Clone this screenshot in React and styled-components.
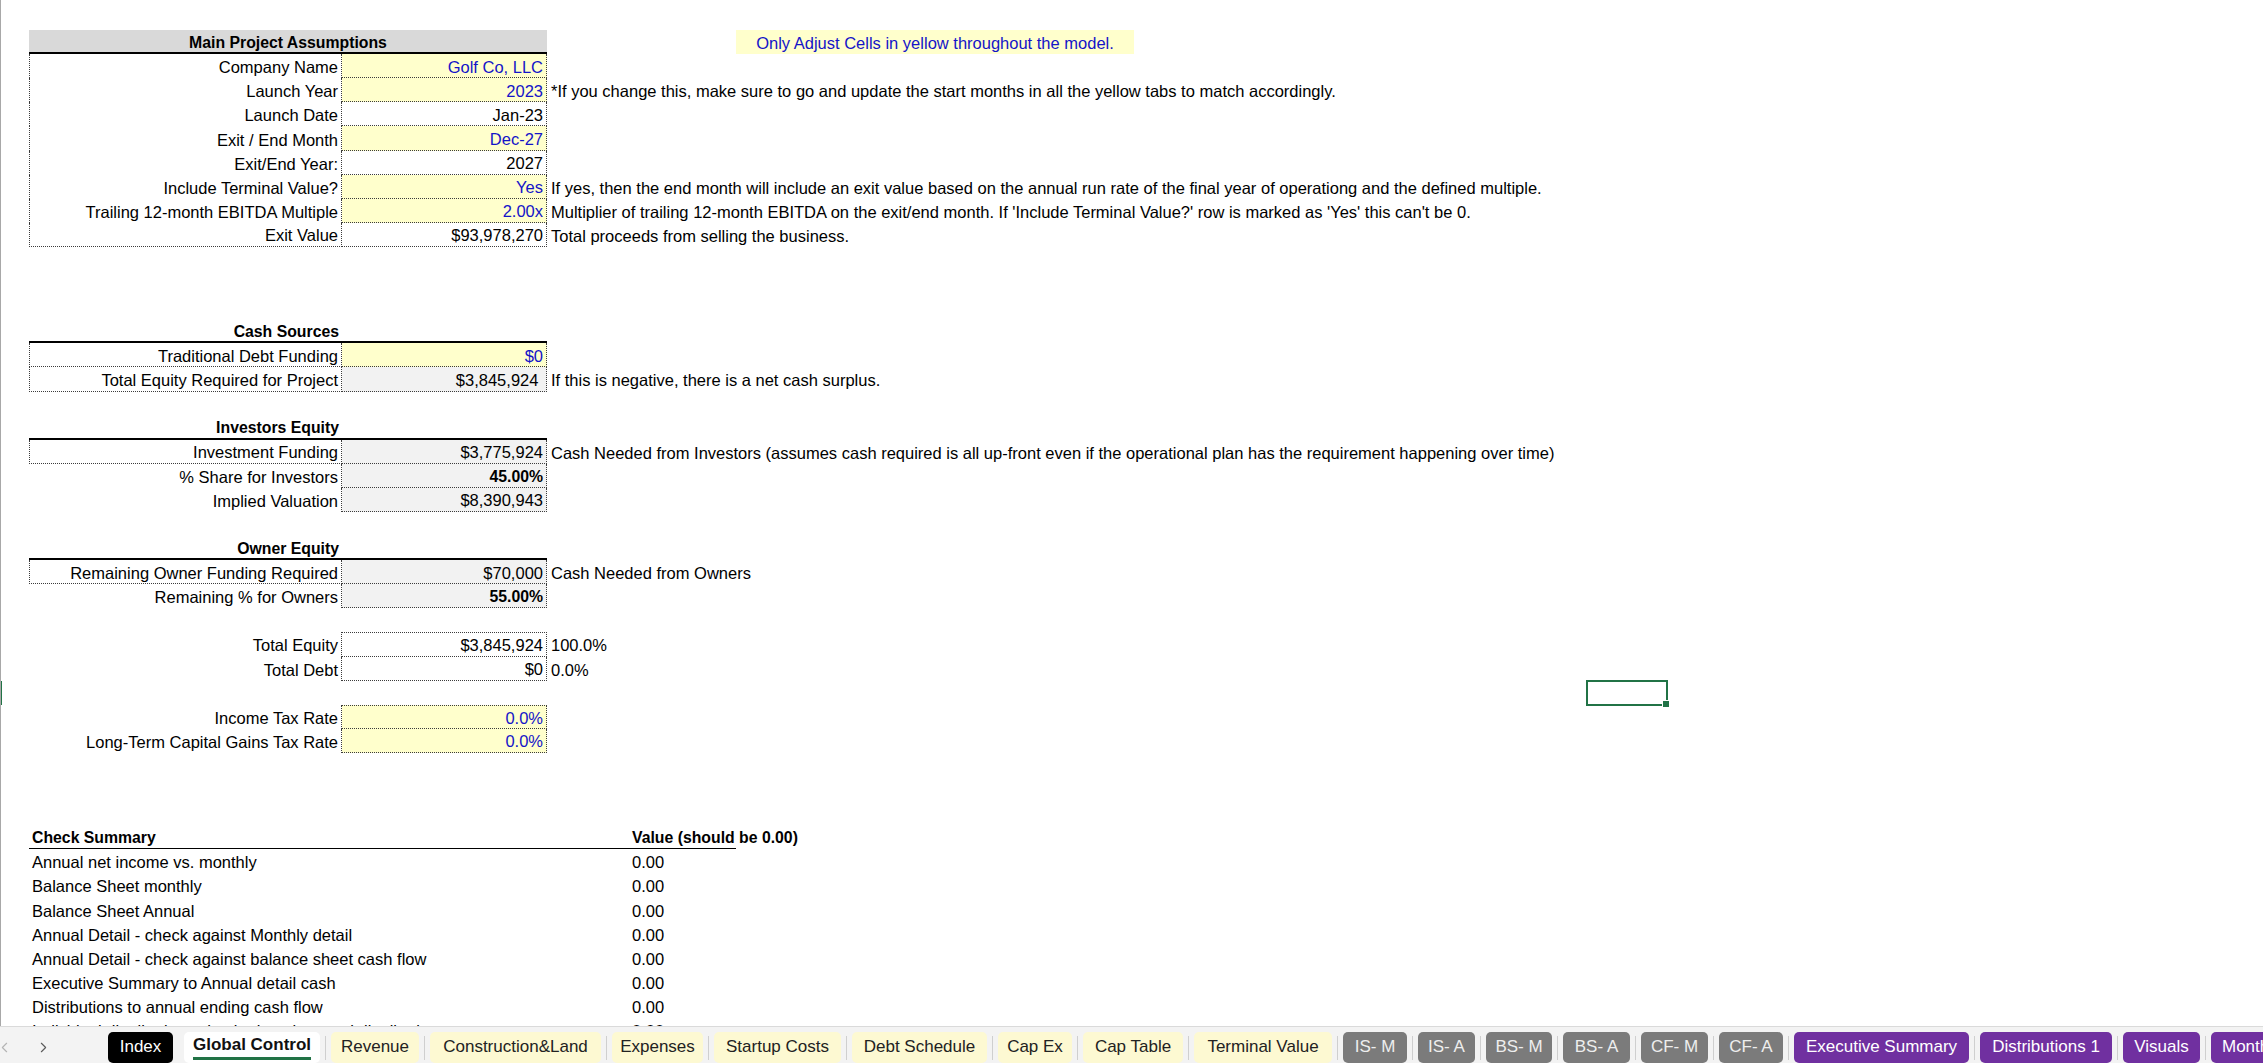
import React from "react";
import styled, { createGlobalStyle } from "styled-components";
import { ChevronLeft, ChevronRight } from "lucide-react";

const ROW = 24.1;
const COLS = "28px 313px 205px 85px 104px 398px 1fr";

const line = {
  dot: "1px dotted #3c3c3c",
  thick: "2px solid #000",
  thin: "1px solid #000",
};

const fills = { input: "#ffffcc", calc: "#f2f2f2", plain: "#ffffff" };
const inks = { input: "#1414c8", calc: "#000", plain: "#000" };

const assumptions = [
  { label: "Company Name", value: "Golf Co, LLC", kind: "input" },
  {
    label: "Launch Year",
    value: "2023",
    kind: "input",
    note: "*If you change this, make sure to go and update the start months in all the yellow tabs to match accordingly.",
  },
  { label: "Launch Date", value: "Jan-23", kind: "plain" },
  { label: "Exit / End Month", value: "Dec-27", kind: "input" },
  { label: "Exit/End Year:", value: "2027", kind: "plain" },
  {
    label: "Include Terminal Value?",
    value: "Yes",
    kind: "input",
    note: "If yes, then the end month will include an exit value based on the annual run rate of the final year of operationg and the defined multiple.",
  },
  {
    label: "Trailing 12-month EBITDA Multiple",
    value: "2.00x",
    kind: "input",
    note: "Multiplier of trailing 12-month EBITDA on the exit/end month. If 'Include Terminal Value?' row is marked as 'Yes' this can't be 0.",
  },
  {
    label: "Exit Value",
    value: "$93,978,270",
    kind: "plain",
    note: "Total proceeds from selling the business.",
  },
];

const checks = [
  "Annual net income vs. monthly",
  "Balance Sheet monthly",
  "Balance Sheet Annual",
  "Annual Detail - check against Monthly detail",
  "Annual Detail - check against balance sheet cash flow",
  "Executive Summary to Annual detail cash",
  "Distributions to annual ending cash flow",
  "Individual distributions checked against total distributions",
];

const tabs = [
  { name: "Index", w: 65, bg: "#000", ink: "#fff" },
  { name: "Global Control", w: 136, bg: "#fff", ink: "#111", active: true },
  { name: "Revenue", w: 88, bg: "#fdf9d2", ink: "#222" },
  { name: "Construction&Land", w: 171, bg: "#fdf9d2", ink: "#222" },
  { name: "Expenses", w: 91, bg: "#fdf9d2", ink: "#222" },
  { name: "Startup Costs", w: 127, bg: "#fdf9d2", ink: "#222" },
  { name: "Debt Schedule", w: 135, bg: "#fdf9d2", ink: "#222" },
  { name: "Cap Ex", w: 74, bg: "#fdf9d2", ink: "#222" },
  { name: "Cap Table", w: 100, bg: "#fdf9d2", ink: "#222" },
  { name: "Terminal Value", w: 138, bg: "#fdf9d2", ink: "#222" },
  { name: "IS- M", w: 64, bg: "#7b7b7b", ink: "#eeeeee" },
  { name: "IS- A", w: 57, bg: "#7b7b7b", ink: "#eeeeee" },
  { name: "BS- M", w: 66, bg: "#7b7b7b", ink: "#eeeeee" },
  { name: "BS- A", w: 67, bg: "#7b7b7b", ink: "#eeeeee" },
  { name: "CF- M", w: 67, bg: "#7b7b7b", ink: "#eeeeee" },
  { name: "CF- A", w: 64, bg: "#7b7b7b", ink: "#eeeeee" },
  { name: "Executive Summary", w: 175, bg: "#7030a0", ink: "#fff" },
  { name: "Distributions 1", w: 132, bg: "#7030a0", ink: "#fff" },
  { name: "Visuals", w: 77, bg: "#7030a0", ink: "#fff" },
  { name: "Monthly Summary", w: 160, bg: "#7030a0", ink: "#fff", left: true },
];

function FieldRow({ label, value, kind = "plain", note, bold, frame = "edge", top, last }) {
  const boxed = frame === "open" || frame === "closed";
  return (
    <Row>
      <Cell
        $col="2"
        $align="right"
        $l={boxed ? "dot" : null}
        $r="dot"
        $b={frame === "closed" || (frame === "open" && last) ? "dot" : null}
      >
        {label}
      </Cell>
      <Cell
        $col="3"
        $align="right"
        $fill={fills[kind]}
        $ink={inks[kind]}
        $bold={bold}
        $r="dot"
        $b="dot"
        $t={top ? "dot" : null}
      >
        {value}
      </Cell>
      {note && (
        <Cell $col="4 / -1" $pad={4}>
          {note}
        </Cell>
      )}
    </Row>
  );
}

function SectionHead({ title }) {
  return (
    <Row>
      <Cell $col="2" $align="right" $bold $b="thick">
        {title}
      </Cell>
      <Cell $col="3" $b="thick" />
    </Row>
  );
}

function Blank({ count = 1 }) {
  return Array.from({ length: count }, (_, i) => <Row key={i} />);
}

export default function App() {
  return (
    <Frame>
      <GlobalStyle />
      <Sheet>
        <Blank />
        <Row>
          <Cell $col="2 / 4" $align="center" $fill="#d9d9d9" $bold $b="thick">
            Main Project Assumptions
          </Cell>
          <Cell $col="6" $align="center" $fill="#ffffcc" $ink="#1414c8">
            Only Adjust Cells in yellow throughout the model.
          </Cell>
        </Row>
        {assumptions.map((a, i) => (
          <FieldRow key={a.label} {...a} frame="open" last={i === assumptions.length - 1} />
        ))}
        <Blank count={3} />

        <SectionHead title="Cash Sources" />
        <FieldRow label="Traditional Debt Funding" value="$0" kind="input" frame="closed" />
        <FieldRow
          label="Total Equity Required for Project"
          value="$3,845,924 "
          kind="calc"
          frame="closed"
          note="If this is negative, there is a net cash surplus."
        />
        <Blank />

        <SectionHead title="Investors Equity" />
        <FieldRow
          label="Investment Funding"
          value="$3,775,924"
          kind="calc"
          frame="closed"
          note="Cash Needed from Investors (assumes cash required is all up-front even if the operational plan has the requirement happening over time)"
        />
        <FieldRow label="% Share for Investors" value="45.00%" kind="calc" bold />
        <FieldRow label="Implied Valuation" value="$8,390,943" kind="calc" />
        <Blank />

        <SectionHead title="Owner Equity" />
        <FieldRow
          label="Remaining Owner Funding Required"
          value="$70,000"
          kind="calc"
          frame="closed"
          note="Cash Needed from Owners"
        />
        <FieldRow label="Remaining % for Owners" value="55.00%" kind="calc" bold />
        <Blank />

        <FieldRow label="Total Equity" value="$3,845,924" top note="100.0%" />
        <FieldRow label="Total Debt" value="$0" note="0.0%" />
        <Blank />

        <FieldRow label="Income Tax Rate" value="0.0%" kind="input" top />
        <FieldRow label="Long-Term Capital Gains Tax Rate" value="0.0%" kind="input" />
        <Blank count={3} />

        <Row>
          <Cell $col="2 / 5" $bold $b="thin">
            Check Summary
          </Cell>
          <Cell $col="5" $bold $pad={0} $b="thin">
            Value (should be 0.00)
          </Cell>
        </Row>
        {checks.map((c) => (
          <Row key={c}>
            <Cell $col="2 / 5">{c}</Cell>
            <Cell $col="5" $pad={0}>
              0.00
            </Cell>
          </Row>
        ))}

        <Selection />
        <RowMark />
      </Sheet>

      <TabBar>
        <Arrows>
          <ChevronLeft size={17} color="#b4b4b4" strokeWidth={1.6} />
          <ChevronRight size={17} color="#5a5a5a" strokeWidth={1.6} />
        </Arrows>
        <TabStrip>
          {tabs.map((t, i) => (
            <Tab
              key={t.name}
              $w={t.w}
              $bg={t.bg}
              $ink={t.ink}
              $active={t.active}
              $left={t.left}
              $sep={i > 0 && !t.active}
            >
              {t.active ? <ActiveLabel>{t.name}</ActiveLabel> : t.name}
            </Tab>
          ))}
        </TabStrip>
      </TabBar>
    </Frame>
  );
}

const GlobalStyle = createGlobalStyle`
  html, body {
    margin: 0;
    padding: 0;
    background: #ffffff;
    overflow: hidden;
  }
  #root {
    height: 100vh;
  }
`;

const Frame = styled.div`
  width: 100vw;
  height: 100vh;
  display: flex;
  flex-direction: column;
  font-family: "Liberation Sans", Arial, sans-serif;
  font-size: 16.5px;
  color: #000;
`;

const Sheet = styled.div`
  position: relative;
  flex: 1 1 auto;
  min-height: 0;
  overflow: hidden;
  display: flex;
  flex-direction: column;
  padding-top: 6px;
  border-left: 1px solid #a8a8a8;
  box-sizing: border-box;
`;

const Row = styled.div`
  display: grid;
  grid-template-columns: ${COLS};
  height: ${ROW}px;
  flex: 0 0 auto;
`;

const alignMap = { left: "flex-start", right: "flex-end", center: "center" };

const Cell = styled.div`
  grid-column: ${(p) => p.$col || "auto"};
  grid-row: 1;
  display: flex;
  align-items: center;
  justify-content: ${(p) => alignMap[p.$align || "left"]};
  padding: 3px ${(p) => (p.$pad ?? 3)}px 0;
  box-sizing: border-box;
  min-width: 0;
  white-space: pre;
  background: ${(p) => p.$fill || "transparent"};
  color: ${(p) => p.$ink || "#000"};
  font-weight: ${(p) => (p.$bold ? 700 : 400)};
  font-size: ${(p) => (p.$bold ? "15.8px" : "inherit")};
  border-left: ${(p) => line[p.$l] || "none"};
  border-right: ${(p) => line[p.$r] || "none"};
  border-top: ${(p) => line[p.$t] || "none"};
  border-bottom: ${(p) => line[p.$b] || "none"};
`;

const Selection = styled.div`
  position: absolute;
  top: ${6 + 28 * ROW - 1}px;
  left: 1585px;
  width: 82px;
  height: 26px;
  border: 2px solid #217346;
  box-sizing: border-box;

  &::after {
    content: "";
    position: absolute;
    right: -4px;
    bottom: -4px;
    width: 6px;
    height: 6px;
    background: #217346;
    border: 1px solid #fff;
  }
`;

const RowMark = styled.div`
  position: absolute;
  left: -1px;
  top: ${6 + 28 * ROW}px;
  width: 2px;
  height: ${ROW}px;
  background: #217346;
`;

const TabBar = styled.div`
  flex: 0 0 37px;
  display: flex;
  align-items: flex-start;
  padding-top: 5px;
  box-sizing: border-box;
  border-top: 1px solid #dadada;
  background: #f3f3f3;
  overflow: hidden;
  font-family: "Liberation Sans", Arial, sans-serif;
  font-size: 17px;
`;

const Arrows = styled.div`
  flex: 0 0 108px;
  height: 31px;
  display: flex;
  align-items: center;
  gap: 22px;
  margin-left: -4px;
  box-sizing: border-box;
`;

const TabStrip = styled.div`
  display: flex;
  gap: 11px;
  margin-left: 4px;
`;

const Tab = styled.div`
  position: relative;
  flex: 0 0 ${(p) => p.$w}px;
  height: 31px;
  display: flex;
  align-items: ${(p) => (p.$active ? "flex-start" : "center")};
  justify-content: ${(p) => (p.$left ? "flex-start" : "center")};
  padding: ${(p) => (p.$left ? "0 0 1px 11px" : "0 0 1px")};
  box-sizing: border-box;
  border-radius: 5px;
  background: ${(p) => p.$bg};
  color: ${(p) => p.$ink};
  white-space: nowrap;

  &::before {
    content: "";
    display: ${(p) => (p.$sep ? "block" : "none")};
    position: absolute;
    left: -6px;
    top: 4px;
    width: 1px;
    height: 24px;
    background: #cfcfcf;
  }
`;

const ActiveLabel = styled.span`
  margin-top: 3px;
  padding-bottom: 2px;
  border-bottom: 3px solid #217346;
  font-weight: 600;
`;
